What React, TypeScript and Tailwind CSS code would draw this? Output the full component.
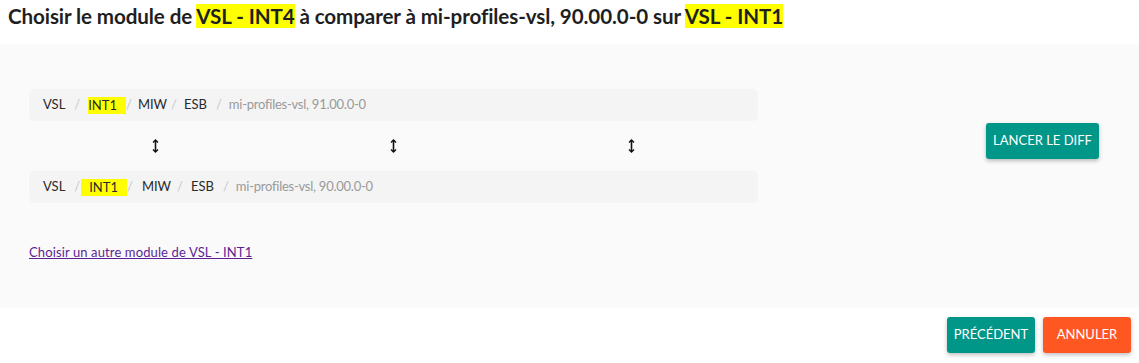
import React from "react";

const Arrow = () => (
  <svg width="7" height="14" viewBox="0 0 7 14" className="block">
    <path d="M3.5 1 L3.5 13" stroke="#111" strokeWidth="1.6" />
    <path d="M1 3.5 L3.5 1 L6 3.5" fill="none" stroke="#111" strokeWidth="1.4" />
    <path d="M1 10.5 L3.5 13 L6 10.5" fill="none" stroke="#111" strokeWidth="1.4" />
  </svg>
);

const Sep = ({ cls }: { cls: string }) => <span className={`text-[#c8c8c8] ${cls}`}>/</span>;

export default function App() {
  return (
    <div className="w-[1139px] h-[363px] bg-white flex flex-col" style={{ fontFamily: "Lato, 'Noto Sans', sans-serif" }}>
      <div className="h-[44px] pl-[8px] pt-[7px]">
        <h1 className="text-[20.6px] leading-[19px] font-bold text-[#1f1f1f] tracking-[-0.1px] whitespace-nowrap">
          Choisir le module de <span className="bg-[#ffff00]">VSL - INT4</span> à comparer à mi-profiles-vsl, 90.00.0-0 sur{" "}
          <span className="bg-[#ffff00]">VSL - INT1</span>
        </h1>
      </div>
      <div className="h-[264px] bg-[#fafafa] flex pl-[29px] pt-[45px]">
        <div className="w-[729px] flex flex-col">
          <div className="h-[32px] rounded-[5px] bg-[#f4f4f4] flex items-center pl-[14px] text-[13px] text-[#2a2a2a]">
            <span>VSL</span>
            <Sep cls="ml-[9px]" />
            <span className="ml-[8px] bg-[#ffff00] pr-[9px] leading-[17px]">INT1</span>
            <Sep cls="" />
            <span className="ml-[6px]">MIW</span>
            <Sep cls="ml-[4px]" />
            <span className="ml-[7px]">ESB</span>
            <Sep cls="ml-[9px]" />
            <span className="ml-[7px] text-[#9a9a9a] tracking-[-0.25px]">mi-profiles-vsl, 91.00.0-0</span>
          </div>
          <div className="h-[50px] flex items-center pl-[123px]">
            <div className="w-[7px] flex justify-center"><Arrow /></div>
            <div className="w-[7px] ml-[231px] flex justify-center"><Arrow /></div>
            <div className="w-[7px] ml-[231px] flex justify-center"><Arrow /></div>
          </div>
          <div className="h-[32px] rounded-[5px] bg-[#f4f4f4] flex items-center pl-[14px] text-[13px] text-[#2a2a2a]">
            <span>VSL</span>
            <Sep cls="ml-[9px]" />
            <span className="ml-[1px] bg-[#ffff00] pl-[8px] pr-[9px] leading-[17px]">INT1</span>
            <Sep cls="" />
            <span className="ml-[9px]">MIW</span>
            <Sep cls="ml-[6px]" />
            <span className="ml-[8px]">ESB</span>
            <Sep cls="ml-[9px]" />
            <span className="ml-[7px] text-[#9a9a9a] tracking-[-0.25px]">mi-profiles-vsl, 90.00.0-0</span>
          </div>
          <div className="mt-[36px]">
            <a href="#" className="text-[13px] text-[#5b1f96] underline tracking-[0.12px]">
              Choisir un autre module de VSL - INT1
            </a>
          </div>
        </div>
        <div className="ml-[228px] mt-[34px]">
          <button className="h-[36px] w-[113px] bg-[#009688] text-white text-[13px] rounded-[3px] shadow-[0_2px_4px_rgba(0,0,0,0.25)]">
            LANCER LE DIFF
          </button>
        </div>
      </div>
      <div className="flex justify-end gap-[8px] pr-[8px] pt-[9px]">
        <button className="h-[36px] w-[88px] bg-[#009688] text-white text-[13px] rounded-[3px] shadow-[0_2px_4px_rgba(0,0,0,0.25)]">
          PRÉCÉDENT
        </button>
        <button className="h-[36px] w-[88px] bg-[#ff5722] text-white text-[13px] rounded-[3px] shadow-[0_2px_4px_rgba(0,0,0,0.25)]">
          ANNULER
        </button>
      </div>
    </div>
  );
}
